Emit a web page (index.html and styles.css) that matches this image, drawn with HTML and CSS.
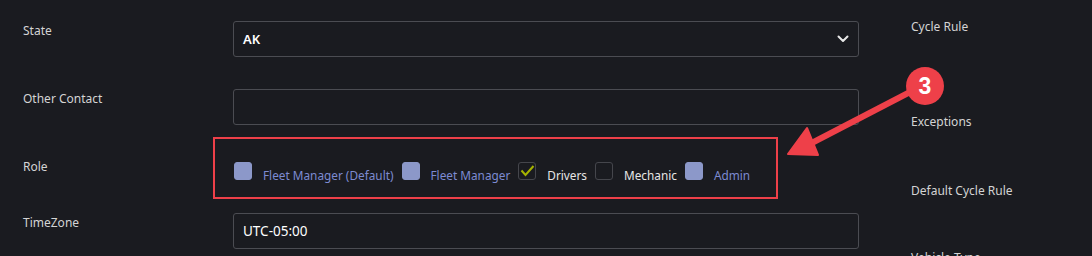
FILE: index.html
```html
<!DOCTYPE html>
<html lang="en">
<head>
    <meta charset="UTF-8">
    <title>Driver Details</title>
    <link rel="stylesheet" href="styles.css">
</head>
<body>
    <div class="page">
        <div class="form">
            <div class="row">
                <label class="field-label">State</label>
                <div class="control select">
                    <span class="value">AK</span>
                    <svg class="chevron" width="12" height="8" viewBox="0 0 12 8"><path d="M1.5 1.5 L6 6 L10.5 1.5" fill="none" stroke="#e8e8e8" stroke-width="2" stroke-linecap="round" stroke-linejoin="round"/></svg>
                </div>
            </div>
            <div class="row">
                <label class="field-label">Other Contact</label>
                <div class="control"></div>
            </div>
            <div class="row role-row">
                <label class="field-label">Role</label>
                <div class="role-box">
                    <span class="check filled"></span><span class="opt blue">Fleet Manager (Default)</span>
                    <span class="check filled"></span><span class="opt blue">Fleet Manager</span>
                    <span class="check empty"><svg width="15" height="12" viewBox="0 0 15 12"><path d="M1.5 5.5 L5.5 10 L13.5 1" fill="none" stroke="#a6b300" stroke-width="2"/></svg></span><span class="opt">Drivers</span>
                    <span class="check empty"></span><span class="opt">Mechanic</span>
                    <span class="check filled"></span><span class="opt blue">Admin</span>
                </div>
            </div>
            <div class="row tz-row">
                <label class="field-label">TimeZone</label>
                <div class="control"><span class="value light">UTC-05:00</span></div>
            </div>
        </div>
        <div class="side">
            <div class="side-label first">Cycle Rule</div>
            <div class="side-label exc">Exceptions</div>
            <div class="side-label dcr">Default Cycle Rule</div>
            <div class="side-label vt">Vehicle Type</div>
        </div>
    </div>

    <!-- annotation -->
    <svg class="callout" width="1092" height="256" viewBox="0 0 1092 256">
        <line x1="912" y1="91" x2="806" y2="146" stroke="#ee4049" stroke-width="6"/>
        <polygon points="788,154 807,128 818,155" fill="#ee4049" stroke="#ee4049" stroke-width="2" stroke-linejoin="round"/>
        <circle cx="925" cy="86" r="19" fill="#ee4049"/>
        <text x="925" y="94" text-anchor="middle" class="badge-num">3</text>
    </svg>
</body>
</html>
```

FILE: styles.css
```css
body {
    margin: 0;
    background: #1a1b20;
    font-family: "Noto Sans", "Open Sans", sans-serif;
    font-size: 12px;
    color: #d4d4d4;
    overflow: hidden;
    height: 256px;
}
.page {
    display: flex;
    position: relative;
}
.form {
    width: 837px;
    padding-left: 23px;
    padding-top: 21px;
}
.row {
    display: grid;
    grid-template-columns: 210px 626px;
    align-items: start;
    margin-bottom: 32px;
}
.field-label {
    padding-top: 2px;
    line-height: 16px;
}
.control {
    height: 34px;
    border: 1px solid #4b4c52;
    border-radius: 3px;
    display: flex;
    align-items: center;
    padding: 0 9px;
    justify-content: space-between;
}
.value {
    color: #fff;
    font-size: 13px;
    font-weight: 600;
}
.value.light {
    font-weight: 400;
    font-size: 13.5px;
}
.role-row {
    margin-top: -20px;
    margin-bottom: 14px;
}
.role-row .field-label {
    padding-top: 22px;
}
.role-box {
    margin-left: -20px;
    width: 565px;
    height: 62px;
    border: 2px solid #ee4049;
    display: flex;
    align-items: center;
    padding: 5px 0 0 19px;
    box-sizing: border-box;
}
.check {
    width: 18px;
    height: 18px;
    border-radius: 3px;
    flex: none;
    display: flex;
    align-items: center;
    justify-content: center;
    box-sizing: border-box;
}
.check.filled {
    background: #8c98c9;
    border: 1px solid #8c98c9;
}
.check.empty {
    border: 1px solid #45464c;
}
.opt {
    margin-left: 11px;
    margin-right: 8px;
    padding-top: 8px;
    font-size: 11.8px;
    color: #e6e6e6;
}
.opt.blue {
    color: #7d8bd2;
}
.tz-row {
    margin-bottom: 0;
}
.side {
    padding-left: 51px;
}
.side-label {
    line-height: 16px;
}
.side-label.first {
    margin-top: 19px;
}
.side-label.exc {
    margin-top: 79px;
}
.side-label.dcr {
    margin-top: 53px;
}
.side-label.vt {
    margin-top: 51px;
}
.callout {
    position: absolute;
    left: 0;
    top: 0;
    pointer-events: none;
}
.badge-num {
    fill: #fff;
    font-family: "Liberation Sans", Arial, sans-serif;
    font-size: 23px;
    font-weight: 700;
}
```
